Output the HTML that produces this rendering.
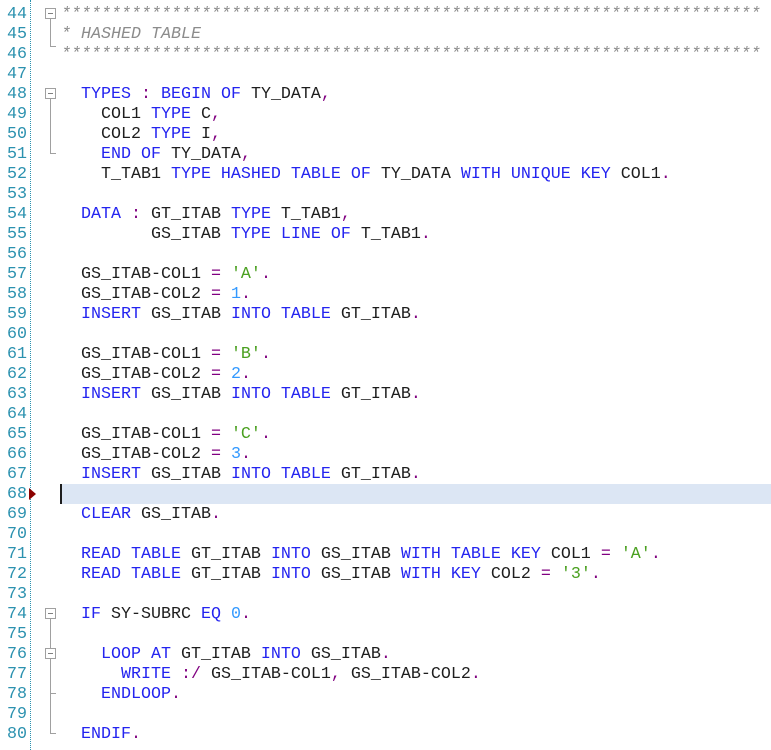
<!DOCTYPE html>
<html><head><meta charset="utf-8"><style>
body{margin:0;width:771px;height:750px;background:#fff;overflow:hidden;position:relative;font-family:"Liberation Mono",monospace;font-size:16.67px;}
.ln{position:absolute;left:0;width:27px;text-align:right;color:#2b91af;height:20px;line-height:20px;margin-top:2px;}
.c{position:absolute;left:61px;height:20px;line-height:20px;white-space:pre;color:#1e1e1e;margin-top:2px;}
.k{color:#2424f0}.p{color:#800080}.s{color:#4aa020}.n{color:#3399ff}.cm{color:#8c8c8c;font-style:italic}
.dots{position:absolute;left:30px;top:0;height:750px;border-left:1px dotted #2b91af;}
.box{position:absolute;left:45px;width:9px;height:9px;border:1px solid #a0a0a0;background:#fff;}
.box:after{content:"";position:absolute;left:2px;top:4px;width:5px;height:1px;background:#808080;}
.v{position:absolute;left:50px;width:1px;background:#a0a0a0;}
.h{position:absolute;left:50px;width:6px;height:1px;background:#a0a0a0;}
</style></head><body>
<div class="dots"></div>
<div style="position:absolute;left:62px;top:484px;width:709px;height:20px;background:#dce6f4"></div>
<div style="position:absolute;left:60px;top:484px;width:2px;height:20px;background:#1e1e1e"></div>
<svg style="position:absolute;left:28px;top:488px" width="10" height="12"><polygon points="1,0 8,6 1,12" fill="#8b0000"/></svg>

<div class="box" style="top:8px"></div><div class="v" style="top:19px;height:27px"></div><div class="h" style="top:46px"></div>
<div class="box" style="top:88px"></div><div class="v" style="top:99px;height:54px"></div><div class="h" style="top:153px"></div>
<div class="box" style="top:608px"></div><div class="v" style="top:619px;height:114px"></div><div class="h" style="top:733px"></div>
<div class="box" style="top:648px"></div><div class="h" style="top:693px"></div>

<div class="ln" style="top:3px">44</div><div class="c cm" style="top:3px">**********************************************************************</div>
<div class="ln" style="top:23px">45</div><div class="c cm" style="top:23px">* HASHED TABLE</div>
<div class="ln" style="top:43px">46</div><div class="c cm" style="top:43px">**********************************************************************</div>
<div class="ln" style="top:63px">47</div>
<div class="ln" style="top:83px">48</div><div class="c" style="top:83px">  <span class="k">TYPES</span> <span class="p">:</span> <span class="k">BEGIN OF</span> TY_DATA<span class="p">,</span></div>
<div class="ln" style="top:103px">49</div><div class="c" style="top:103px">    COL1 <span class="k">TYPE</span> C<span class="p">,</span></div>
<div class="ln" style="top:123px">50</div><div class="c" style="top:123px">    COL2 <span class="k">TYPE</span> I<span class="p">,</span></div>
<div class="ln" style="top:143px">51</div><div class="c" style="top:143px">    <span class="k">END OF</span> TY_DATA<span class="p">,</span></div>
<div class="ln" style="top:163px">52</div><div class="c" style="top:163px">    T_TAB1 <span class="k">TYPE HASHED TABLE OF</span> TY_DATA <span class="k">WITH UNIQUE KEY</span> COL1<span class="p">.</span></div>
<div class="ln" style="top:183px">53</div>
<div class="ln" style="top:203px">54</div><div class="c" style="top:203px">  <span class="k">DATA</span> <span class="p">:</span> GT_ITAB <span class="k">TYPE</span> T_TAB1<span class="p">,</span></div>
<div class="ln" style="top:223px">55</div><div class="c" style="top:223px">         GS_ITAB <span class="k">TYPE LINE OF</span> T_TAB1<span class="p">.</span></div>
<div class="ln" style="top:243px">56</div>
<div class="ln" style="top:263px">57</div><div class="c" style="top:263px">  GS_ITAB-COL1 <span class="p">=</span> <span class="s">'A'</span><span class="p">.</span></div>
<div class="ln" style="top:283px">58</div><div class="c" style="top:283px">  GS_ITAB-COL2 <span class="p">=</span> <span class="n">1</span><span class="p">.</span></div>
<div class="ln" style="top:303px">59</div><div class="c" style="top:303px">  <span class="k">INSERT</span> GS_ITAB <span class="k">INTO TABLE</span> GT_ITAB<span class="p">.</span></div>
<div class="ln" style="top:323px">60</div>
<div class="ln" style="top:343px">61</div><div class="c" style="top:343px">  GS_ITAB-COL1 <span class="p">=</span> <span class="s">'B'</span><span class="p">.</span></div>
<div class="ln" style="top:363px">62</div><div class="c" style="top:363px">  GS_ITAB-COL2 <span class="p">=</span> <span class="n">2</span><span class="p">.</span></div>
<div class="ln" style="top:383px">63</div><div class="c" style="top:383px">  <span class="k">INSERT</span> GS_ITAB <span class="k">INTO TABLE</span> GT_ITAB<span class="p">.</span></div>
<div class="ln" style="top:403px">64</div>
<div class="ln" style="top:423px">65</div><div class="c" style="top:423px">  GS_ITAB-COL1 <span class="p">=</span> <span class="s">'C'</span><span class="p">.</span></div>
<div class="ln" style="top:443px">66</div><div class="c" style="top:443px">  GS_ITAB-COL2 <span class="p">=</span> <span class="n">3</span><span class="p">.</span></div>
<div class="ln" style="top:463px">67</div><div class="c" style="top:463px">  <span class="k">INSERT</span> GS_ITAB <span class="k">INTO TABLE</span> GT_ITAB<span class="p">.</span></div>
<div class="ln" style="top:483px">68</div>
<div class="ln" style="top:503px">69</div><div class="c" style="top:503px">  <span class="k">CLEAR</span> GS_ITAB<span class="p">.</span></div>
<div class="ln" style="top:523px">70</div>
<div class="ln" style="top:543px">71</div><div class="c" style="top:543px">  <span class="k">READ TABLE</span> GT_ITAB <span class="k">INTO</span> GS_ITAB <span class="k">WITH TABLE KEY</span> COL1 <span class="p">=</span> <span class="s">'A'</span><span class="p">.</span></div>
<div class="ln" style="top:563px">72</div><div class="c" style="top:563px">  <span class="k">READ TABLE</span> GT_ITAB <span class="k">INTO</span> GS_ITAB <span class="k">WITH KEY</span> COL2 <span class="p">=</span> <span class="s">'3'</span><span class="p">.</span></div>
<div class="ln" style="top:583px">73</div>
<div class="ln" style="top:603px">74</div><div class="c" style="top:603px">  <span class="k">IF</span> SY-SUBRC <span class="k">EQ</span> <span class="n">0</span><span class="p">.</span></div>
<div class="ln" style="top:623px">75</div>
<div class="ln" style="top:643px">76</div><div class="c" style="top:643px">    <span class="k">LOOP AT</span> GT_ITAB <span class="k">INTO</span> GS_ITAB<span class="p">.</span></div>
<div class="ln" style="top:663px">77</div><div class="c" style="top:663px">      <span class="k">WRITE</span> <span class="p">:/</span> GS_ITAB-COL1<span class="p">,</span> GS_ITAB-COL2<span class="p">.</span></div>
<div class="ln" style="top:683px">78</div><div class="c" style="top:683px">    <span class="k">ENDLOOP</span><span class="p">.</span></div>
<div class="ln" style="top:703px">79</div>
<div class="ln" style="top:723px">80</div><div class="c" style="top:723px">  <span class="k">ENDIF</span><span class="p">.</span></div>
</body></html>
